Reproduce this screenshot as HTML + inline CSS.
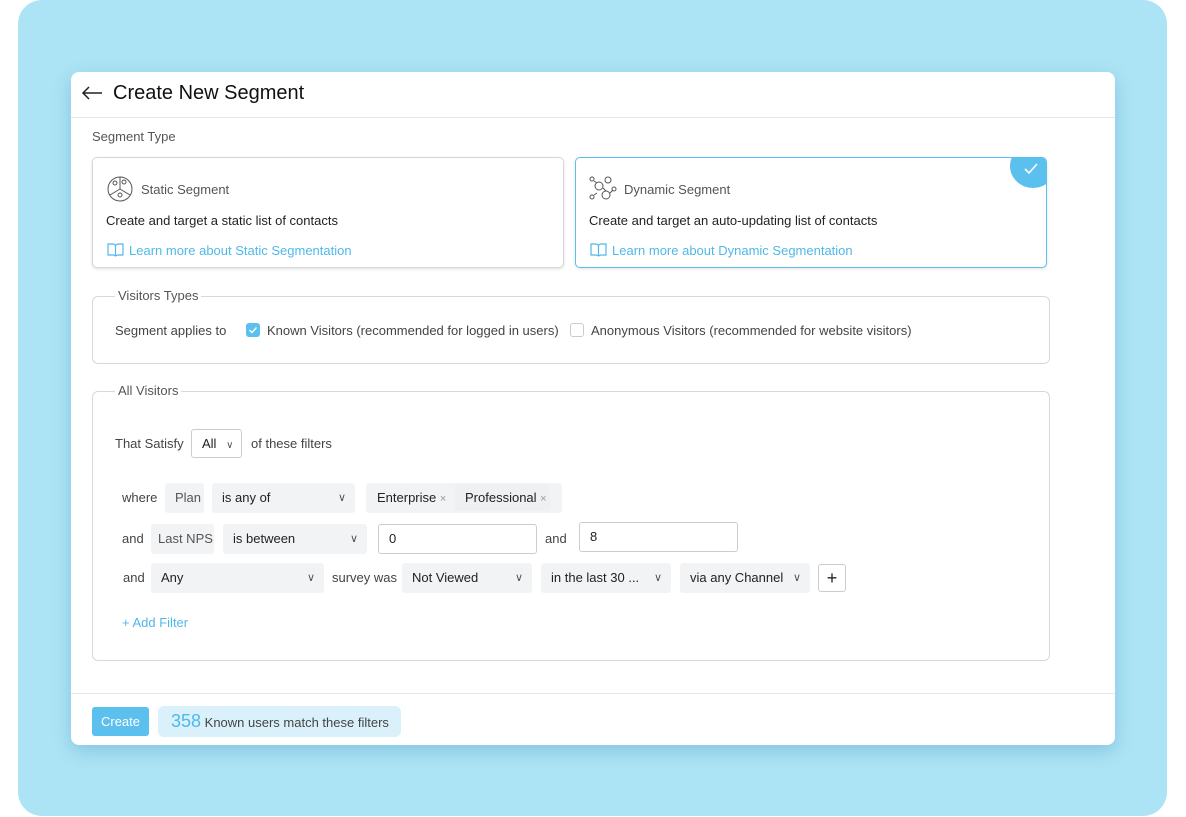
<!DOCTYPE html>
<html><head><meta charset="utf-8"><style>
*{box-sizing:border-box;margin:0;padding:0;white-space:nowrap}
body{width:1186px;height:817px;background:#fff;font-family:"Liberation Sans",sans-serif;position:relative;overflow:hidden;color:#333}
.bg{position:absolute;left:18px;top:0;width:1149px;height:816px;background:#ade4f5;border-radius:24px}
.card{position:absolute;left:71px;top:72px;width:1044px;height:673px;background:#fff;border-radius:8px;box-shadow:0 6px 18px rgba(60,140,190,.35);overflow:hidden}
.abs{position:absolute}
.t13{font-size:13px;color:#444}
.hdr{position:absolute;left:0;top:45px;width:100%;border-top:1px solid #e6e6e6}
.ftr{position:absolute;left:0;top:621px;width:100%;border-top:1px solid #e8e8e8}
.seg{position:absolute;top:85px;width:472px;height:111px;border:1px solid #d6d6d6;border-radius:5px;box-shadow:0 1px 3px rgba(0,0,0,.12)}
.seg.sel{border-color:#5cc0ee;overflow:hidden}
.link{color:#4fb8ea;font-size:13px}
.fs{position:absolute;left:21px;width:958px;border:1px solid #d8d8d8;border-radius:6px}
.leg{position:absolute;top:-9px;background:#fff;padding:0 3px;font-size:13px;color:#555}
.dd{position:absolute;height:30px;background:#f1f3f5;border-radius:3px;font-size:13px;color:#222;line-height:30px;padding-left:10px}
.dd .c{position:absolute;right:9px;top:0;color:#555;font-size:11px}
.inp{position:absolute;height:30px;border:1px solid #ccc;border-radius:3px;font-size:13px;line-height:28px;padding-left:10px;color:#222}
</style></head><body>
<div class="bg"></div>
<div class="card">
 <svg class="abs" style="left:10px;top:13px" width="22" height="16" viewBox="0 0 22 16"><path d="M21 8H2M8 2L2 8l6 6" fill="none" stroke="#222" stroke-width="1.5"/></svg>
 <div class="abs" style="left:42px;top:10px;font-size:20px;color:#111">Create New Segment</div>
 <div class="hdr"></div>
 <div class="abs t13" style="left:21px;top:57px;color:#555">Segment Type</div>
 <div class="seg" style="left:21px">
  <svg class="abs" style="left:14px;top:18px" width="26" height="26" viewBox="0 0 26 26" fill="none" stroke="#555" stroke-width="1"><circle cx="13" cy="13" r="12"/><path d="M13 13V1M13 13L3 19M13 13l10 6"/><circle cx="8" cy="7" r="2"/><circle cx="17" cy="6" r="2"/><circle cx="13" cy="19" r="2"/></svg>
  <div class="abs t13" style="left:48px;top:24px;color:#555">Static Segment</div>
  <div class="abs t13" style="left:13px;top:55px;color:#222">Create and target a static list of contacts</div>
  <svg class="abs" style="left:14px;top:85px" width="17" height="14" viewBox="0 0 17 14" fill="none" stroke="#4fb8ea" stroke-width="1.2"><path d="M1 1h5a2.5 2.5 0 012.5 2.5V13 3.5A2.5 2.5 0 0111 1h5v11h-5.5L8.5 13l-2-1H1z"/></svg>
  <div class="abs link" style="left:36px;top:85px">Learn more about Static Segmentation</div>
 </div>
 <div class="seg sel" style="left:504px">
  <div class="abs" style="right:-10px;top:-14px;width:46px;height:44px;background:#5cc0ee;border-radius:50%"></div>
  <svg class="abs" style="right:8px;top:5px" width="14" height="12" viewBox="0 0 14 12"><path d="M1 6l4 4 8-9" fill="none" stroke="#fff" stroke-width="1.6"/></svg>
  <svg class="abs" style="left:13px;top:18px" width="28" height="26" viewBox="0 0 28 26" fill="none" stroke="#555" stroke-width="1"><circle cx="10" cy="10" r="4"/><circle cx="19" cy="4" r="3"/><circle cx="17" cy="19" r="4"/><circle cx="3" cy="3" r="2"/><circle cx="3" cy="21" r="2"/><circle cx="25" cy="13" r="2"/><path d="M5 5l3 2M5 19l3-2M14 12l3 3M21 17l3-3"/></svg>
  <div class="abs t13" style="left:48px;top:24px;color:#555">Dynamic Segment</div>
  <div class="abs t13" style="left:13px;top:55px;color:#222">Create and target an auto-updating list of contacts</div>
  <svg class="abs" style="left:14px;top:85px" width="17" height="14" viewBox="0 0 17 14" fill="none" stroke="#4fb8ea" stroke-width="1.2"><path d="M1 1h5a2.5 2.5 0 012.5 2.5V13 3.5A2.5 2.5 0 0111 1h5v11h-5.5L8.5 13l-2-1H1z"/></svg>
  <div class="abs link" style="left:36px;top:85px">Learn more about Dynamic Segmentation</div>
 </div>
 <div class="fs" style="top:224px;height:68px">
  <div class="leg" style="left:22px">Visitors Types</div>
  <div class="abs t13" style="left:22px;top:26px">Segment applies to</div>
  <div class="abs" style="left:153px;top:26px;width:14px;height:14px;background:#5cc0ee;border-radius:3px"></div>
  <svg class="abs" style="left:155px;top:28px" width="10" height="10" viewBox="0 0 10 10"><path d="M1.5 5l2.5 2.5 4.5-5" fill="none" stroke="#fff" stroke-width="1.4"/></svg>
  <div class="abs t13" style="left:174px;top:26px">Known Visitors (recommended for logged in users)</div>
  <div class="abs" style="left:477px;top:26px;width:14px;height:14px;border:1px solid #ccc;border-radius:3px"></div>
  <div class="abs t13" style="left:498px;top:26px">Anonymous Visitors (recommended for website visitors)</div>
 </div>
 <div class="fs" style="top:319px;height:270px">
  <div class="leg" style="left:22px">All Visitors</div>
  <div class="abs t13" style="left:22px;top:44px">That Satisfy</div>
  <div class="abs" style="left:98px;top:37px;width:51px;height:29px;border:1px solid #ccc;border-radius:3px;font-size:13px;line-height:27px;padding-left:10px;color:#222">All <span style="font-size:10px;color:#555;margin-left:6px">&#8744;</span></div>
  <div class="abs t13" style="left:158px;top:44px">of these filters</div>
  <div class="abs t13" style="left:29px;top:98px">where</div>
  <div class="dd" style="left:72px;top:91px;width:39px;color:#555">Plan</div>
  <div class="dd" style="left:119px;top:91px;width:143px">is any of<span class="c">&#8744;</span></div>
  <div class="dd" style="left:273px;top:91px;width:196px"></div>
  <div class="abs" style="left:273px;top:91px;width:88px;height:30px;font-size:13px;line-height:30px;padding-left:11px;color:#222">Enterprise <span style="color:#999;font-size:11px">×</span></div>
  <div class="abs" style="left:362px;top:93px;width:95px;height:26px;background:#eef0f2;font-size:13px;line-height:26px;padding-left:10px;color:#222">Professional <span style="color:#999;font-size:11px">×</span></div>
  <div class="abs t13" style="left:29px;top:139px">and</div>
  <div class="dd" style="left:58px;top:132px;width:63px;color:#555;padding-left:7px">Last NPS</div>
  <div class="dd" style="left:130px;top:132px;width:144px">is between<span class="c">&#8744;</span></div>
  <div class="inp" style="left:285px;top:132px;width:159px">0</div>
  <div class="abs t13" style="left:452px;top:139px">and</div>
  <div class="inp" style="left:486px;top:130px;width:159px">8</div>
  <div class="abs t13" style="left:30px;top:178px">and</div>
  <div class="dd" style="left:58px;top:171px;width:173px">Any<span class="c">&#8744;</span></div>
  <div class="abs t13" style="left:239px;top:178px">survey was</div>
  <div class="dd" style="left:309px;top:171px;width:130px">Not Viewed<span class="c">&#8744;</span></div>
  <div class="dd" style="left:448px;top:171px;width:130px">in the last 30 ...<span class="c">&#8744;</span></div>
  <div class="dd" style="left:587px;top:171px;width:130px">via any Channel<span class="c">&#8744;</span></div>
  <div class="abs" style="left:725px;top:172px;width:28px;height:28px;border:1px solid #ccc;border-radius:3px;text-align:center;line-height:26px;font-size:18px;color:#222">+</div>
  <div class="abs link" style="left:29px;top:223px">+ Add Filter</div>
 </div>
 <div class="ftr"></div>
 <div class="abs" style="left:21px;top:635px;width:57px;height:29px;background:#5cc0ee;border-radius:3px;color:#fff;font-size:13px;line-height:29px;text-align:center">Create</div>
 <div class="abs" style="left:87px;top:634px;width:243px;height:31px;background:#daf1fb;border-radius:6px;line-height:31px;padding-left:13px;font-size:13px;color:#444"><span style="font-size:18px;color:#4fb8ea">358</span> Known users match these filters</div>
</div>
</body></html>
